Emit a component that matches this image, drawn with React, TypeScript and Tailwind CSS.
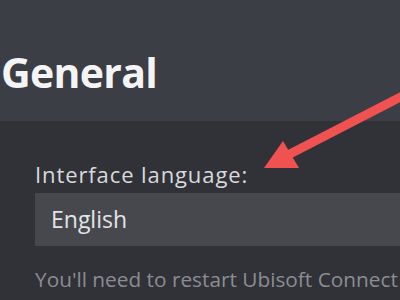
export default function App() {
  return (
    <div
      className="relative h-[300px] w-[400px] overflow-hidden bg-[#303237]"
      style={{ fontFamily: '"Open Sans", "Noto Sans", sans-serif' }}
    >
      <header className="h-[121px] bg-[#3b3e45] pl-[1px] pt-[51px]">
        <h1 className="text-[41px] font-bold leading-[42px] tracking-[-0.7px] text-[#f4f4f5]">
          General
        </h1>
      </header>

      <section className="pl-[35px] pt-[42px]">
        <label className="block text-[22px] leading-[22px] tracking-[0.9px] text-[#d9dadc]">
          Interface language:
        </label>
        <div className="mt-[8px] flex h-[53px] w-[400px] items-center bg-[#46484d] pl-[16px] text-[23px] text-[#e4e4e6]">
          English
        </div>
        <p className="mt-[22px] whitespace-nowrap text-[20.8px] leading-[22px] text-[#8b8d92]">
          You'll need to restart Ubisoft Connect
        </p>
      </section>

      <svg
        className="pointer-events-none absolute left-0 top-0"
        width="400"
        height="300"
        viewBox="0 0 400 300"
      >
        <line x1="286" y1="156" x2="412" y2="91" stroke="#f05252" strokeWidth="9" />
        <polygon points="264,168 283,141 299,168" fill="#f05252" />
      </svg>
    </div>
  );
}
